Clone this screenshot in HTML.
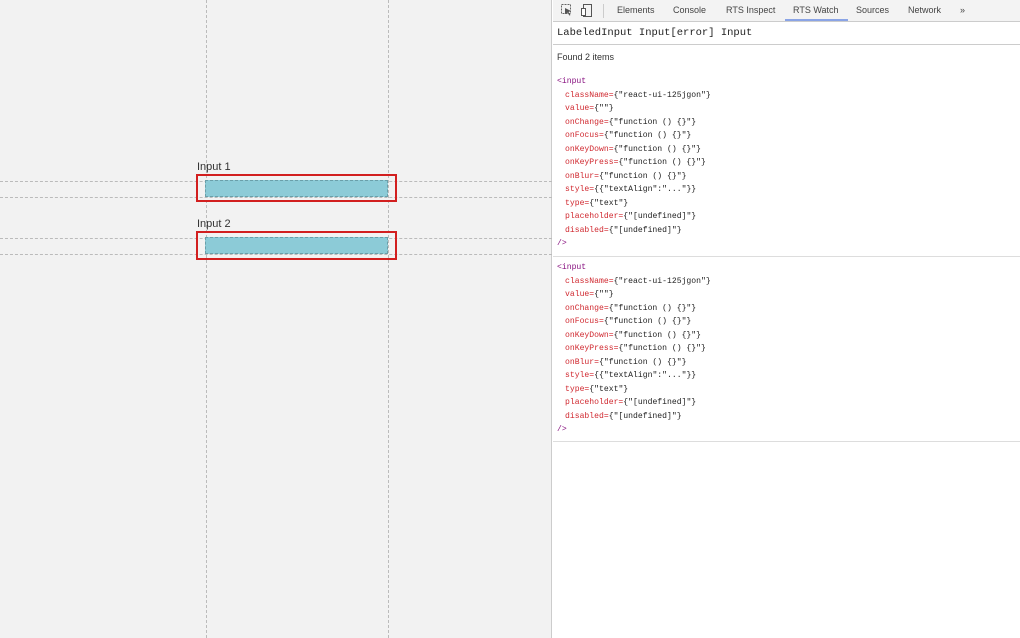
<!DOCTYPE html>
<html><head><style>
*{margin:0;padding:0;box-sizing:border-box}
body{width:1020px;height:638px;overflow:hidden;background:#fff;font-family:"Liberation Sans",sans-serif;position:relative}
#left{position:absolute;left:0;top:0;width:552px;height:638px;background:#f2f2f2;border-right:1px solid #ccc}
.v{position:absolute;top:0;height:638px;border-left:1px dashed #bbb}
.h{position:absolute;left:0;width:552px;border-top:1px dashed #bbb}
.red{position:absolute;border:2px solid #d21f1f}
.inp{position:absolute;background:#8ccbd7;border:1px dashed #6a9fa9}
.lbl{position:absolute;font-size:11px;color:#333}
#right{position:absolute;left:553px;top:0;width:467px;height:638px;background:#fff}
#tabs{height:22px;background:#f3f3f3;border-bottom:1px solid #ccc;position:relative;font-size:9px;color:#444}
#tabs span{position:absolute;top:5px}
#sel{height:23px;border-bottom:1px solid #ccc;font-family:"Liberation Mono",monospace;font-size:10.5px;padding:5px 0 0 4px;color:#222}
.found{position:absolute;left:4px;top:52px;font-size:9px;color:#333}
.code{position:absolute;left:4px;font-family:"Liberation Mono",monospace;font-size:8.1px;line-height:13.5px;color:#222;white-space:pre}
.code i{font-style:normal;padding-left:8px}
.t{color:#881280}.a{color:#d0282f}
.sep{position:absolute;left:0;width:467px;border-top:1px solid #ddd}
</style></head><body>
<div id="left">
<div class="v" style="left:206px"></div><div class="v" style="left:388px"></div>
<div class="h" style="top:181px"></div><div class="h" style="top:197px"></div>
<div class="h" style="top:238px"></div><div class="h" style="top:254px"></div>
<div class="lbl" style="left:197px;top:161px">Input 1</div>
<div class="lbl" style="left:197px;top:218px">Input 2</div>
<div class="red" style="left:196px;top:174px;width:201px;height:28px"></div>
<div class="red" style="left:196px;top:231px;width:201px;height:29px"></div>
<div class="inp" style="left:205px;top:180px;width:183px;height:17px"></div>
<div class="inp" style="left:205px;top:237px;width:183px;height:17px"></div>
</div>
<div id="right">
<div id="tabs">
<svg style="position:absolute;left:8px;top:4px" width="12" height="13" viewBox="0 0 12 13"><rect x="0.5" y="0.5" width="9" height="9" fill="none" stroke="#666" stroke-dasharray="2 1"/><path d="M4 4l6 3-2.5 1 2 3-1 .6-2-3L4 10z" fill="#555"/></svg>
<svg style="position:absolute;left:28px;top:4px" width="12" height="13" viewBox="0 0 12 13"><rect x="2.5" y="0.5" width="8" height="12" fill="none" stroke="#555"/><rect x="0.5" y="4.5" width="4" height="7" fill="#fff" stroke="#555"/></svg>
<div style="position:absolute;left:50px;top:4px;height:14px;border-left:1px solid #ccc"></div>
<span style="left:64px">Elements</span><span style="left:120px">Console</span><span style="left:173px">RTS Inspect</span><span style="left:240px">RTS Watch</span><span style="left:303px">Sources</span><span style="left:355px">Network</span><span style="left:407px">»</span>
<div style="position:absolute;left:232px;top:19px;width:63px;height:2px;background:#8aa4e6"></div>
</div>
<div id="sel">LabeledInput Input[error] Input</div>
<div class="found">Found 2 items</div>
<div class="code" style="top:75px"><span class="t">&lt;input</span>
<i><span class="a">className=</span>{"react-ui-125jgon"}</i>
<i><span class="a">value=</span>{""}</i>
<i><span class="a">onChange=</span>{"function () {}"}</i>
<i><span class="a">onFocus=</span>{"function () {}"}</i>
<i><span class="a">onKeyDown=</span>{"function () {}"}</i>
<i><span class="a">onKeyPress=</span>{"function () {}"}</i>
<i><span class="a">onBlur=</span>{"function () {}"}</i>
<i><span class="a">style=</span>{{"textAlign":"..."}}</i>
<i><span class="a">type=</span>{"text"}</i>
<i><span class="a">placeholder=</span>{"[undefined]"}</i>
<i><span class="a">disabled=</span>{"[undefined]"}</i>
<span class="t">/&gt;</span></div>
<div class="sep" style="top:256px"></div>
<div class="code" style="top:261px"><span class="t">&lt;input</span>
<i><span class="a">className=</span>{"react-ui-125jgon"}</i>
<i><span class="a">value=</span>{""}</i>
<i><span class="a">onChange=</span>{"function () {}"}</i>
<i><span class="a">onFocus=</span>{"function () {}"}</i>
<i><span class="a">onKeyDown=</span>{"function () {}"}</i>
<i><span class="a">onKeyPress=</span>{"function () {}"}</i>
<i><span class="a">onBlur=</span>{"function () {}"}</i>
<i><span class="a">style=</span>{{"textAlign":"..."}}</i>
<i><span class="a">type=</span>{"text"}</i>
<i><span class="a">placeholder=</span>{"[undefined]"}</i>
<i><span class="a">disabled=</span>{"[undefined]"}</i>
<span class="t">/&gt;</span></div>
<div class="sep" style="top:441px"></div>
</div>
</body></html>
